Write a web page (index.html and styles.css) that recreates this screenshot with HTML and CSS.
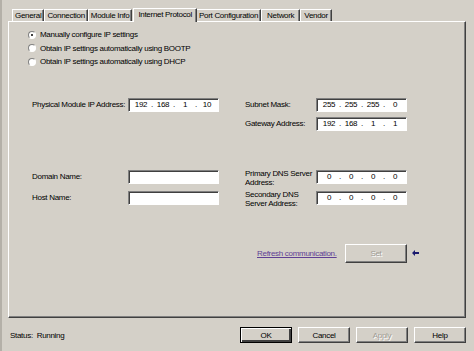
FILE: index.html
```html
<!DOCTYPE html>
<html lang="en">
<head>
    <meta charset="UTF-8">
    <title>Internet Protocol</title>
    <link rel="stylesheet" href="styles.css">
</head>
<body>
    <div class="window">
        <div class="tabs">
            <span class="tab">General</span>
            <span class="tab">Connection</span>
            <span class="tab">Module Info</span>
            <span class="tab active">Internet Protocol</span>
            <span class="tab">Port Configuration</span>
            <span class="tab tab-network">Network</span>
            <span class="tab tab-vendor">Vendor</span>
        </div>

        <div class="panel">
            <div class="radios">
                <label class="radio"><span class="radio-dot checked"></span>Manually configure IP settings</label>
                <label class="radio"><span class="radio-dot"></span>Obtain IP settings automatically using BOOTP</label>
                <label class="radio"><span class="radio-dot"></span>Obtain IP settings automatically using DHCP</label>
            </div>

            <div class="fields ip-fields">
                <span class="label">Physical Module IP Address:</span>
                <span class="ip"><span>192</span><i>.</i><span>168</span><i>.</i><span>1</span><i>.</i><span>10</span></span>
                <span></span>
                <span class="label">Subnet Mask:</span>
                <span class="ip"><span>255</span><i>.</i><span>255</span><i>.</i><span>255</span><i>.</i><span>0</span></span>

                <span class="label gateway">Gateway Address:</span>
                <span class="ip"><span>192</span><i>.</i><span>168</span><i>.</i><span>1</span><i>.</i><span>1</span></span>
            </div>

            <div class="fields dns-fields">
                <span class="label">Domain Name:</span>
                <span class="text-box"></span>
                <span></span>
                <span class="label two-line">Primary DNS Server<br>Address:</span>
                <span class="ip"><span>0</span><i>.</i><span>0</span><i>.</i><span>0</span><i>.</i><span>0</span></span>

                <span class="label">Host Name:</span>
                <span class="text-box"></span>
                <span></span>
                <span class="label two-line">Secondary DNS<br>Server Address:</span>
                <span class="ip"><span>0</span><i>.</i><span>0</span><i>.</i><span>0</span><i>.</i><span>0</span></span>
            </div>

            <div class="refresh-row">
                <a href="#" class="link">Refresh communication.</a>
                <button class="btn set-btn" disabled>Set</button>
                <svg class="arrow" width="7" height="6" viewBox="0 0 7 6">
                    <path d="M0 3 L3 0 L3 2 L7 2 L7 4 L3 4 L3 6 Z" fill="#1a1a6e"/>
                </svg>
            </div>
        </div>

        <div class="footer">
            <span class="status">Status:&nbsp; Running</span>
            <div class="buttons">
                <button class="btn default">OK</button>
                <button class="btn">Cancel</button>
                <button class="btn" disabled>Apply</button>
                <button class="btn">Help</button>
            </div>
        </div>
    </div>
</body>
</html>
```

FILE: styles.css
```css
body {
    margin: 0;
    background-color: #d4d0c8;
    font-family: "Liberation Sans", Arial, sans-serif;
    font-size: 8px;
    letter-spacing: -0.3px;
    color: #000;
}

.window {
    width: 474px;
    height: 351px;
    padding: 8px 8px 0 6px;
    box-sizing: border-box;
    border-left: 2px solid #b4b0a8;
}

.tabs {
    display: flex;
    height: 13px;
    margin-left: 4px;
    align-items: flex-end;
}

.tab {
    height: 11px;
    line-height: 11px;
    padding: 0 2px;
    border-top: 1px solid #fff;
    border-left: 1px solid #fff;
    border-right: 1px solid #404040;
    box-shadow: inset -1px 0 0 #808080;
    white-space: nowrap;
}

.tab-network {
    padding: 0 5px;
}

.tab-vendor {
    padding: 0 3px;
}

.tab.active {
    height: 13px;
    line-height: 12px;
    padding: 0 4px;
    margin: 0 -1px -1px 1px;
    position: relative;
    z-index: 1;
    background-color: #d4d0c8;
}

.panel {
    height: 297px;
    box-sizing: border-box;
    border-top: 1px solid #fff;
    border-left: 1px solid #fff;
    border-right: 1px solid #404040;
    border-bottom: 1px solid #404040;
    box-shadow: inset -1px -1px 0 #808080;
    padding: 6px 0 0 23px;
}

.radios {
    display: flex;
    flex-direction: column;
}

.radio {
    display: flex;
    align-items: center;
    height: 13.5px;
    gap: 4px;
    margin-left: -4px;
}

.radio-dot {
    width: 8px;
    height: 8px;
    border-radius: 50%;
    background-color: #fff;
    border: 1px solid;
    border-color: #808080 #fff #fff #808080;
    box-sizing: border-box;
    position: relative;
}

.radio-dot.checked::after {
    content: "";
    position: absolute;
    left: 2px;
    top: 2px;
    width: 2px;
    height: 2px;
    border-radius: 50%;
    background-color: #000;
}

.fields {
    display: grid;
    grid-template-columns: 96px 91px 26px 71px 91px;
    grid-auto-rows: 14px;
    align-items: center;
}

.ip-fields {
    margin-top: 29px;
    row-gap: 5px;
}

.ip-fields .gateway {
    grid-column: 4;
}

.dns-fields {
    margin-top: 39px;
    row-gap: 7px;
}

.label {
    white-space: nowrap;
}

.two-line {
    line-height: 9px;
    align-self: start;
    margin-top: -1px;
}

.ip, .text-box {
    height: 14px;
    box-sizing: border-box;
    background-color: #fff;
    border-top: 1px solid #808080;
    border-left: 1px solid #808080;
    border-bottom: 1px solid #fff;
    border-right: 1px solid #fff;
    box-shadow: inset 1px 1px 0 #404040;
}

.ip {
    display: flex;
    align-items: center;
    padding-left: 3px;
}

.ip span {
    width: 18px;
    text-align: center;
}

.ip i {
    width: 4px;
    font-style: normal;
    text-align: center;
}

.refresh-row {
    display: flex;
    align-items: center;
    width: 387px;
    box-sizing: border-box;
    margin-top: 39px;
    padding-left: 225px;
}

.link {
    color: #5f3f94;
    text-decoration: underline;
    white-space: nowrap;
}

.btn {
    font: inherit;
    letter-spacing: inherit;
    height: 16px;
    width: 52px;
    padding: 0;
    background-color: #d4d0c8;
    border: 1px solid;
    border-color: #fff #404040 #404040 #fff;
    box-shadow: inset -1px -1px 0 #808080;
    color: #000;
}

.btn:disabled {
    color: #a09c94;
    text-shadow: 1px 1px 0 #fff;
}

.btn.default {
    border-color: #000;
    box-shadow: inset 1px 1px 0 #fff, inset -2px -2px 0 #404040;
}

.set-btn {
    width: 62px;
    height: 19px;
    margin-left: auto;
}

.arrow {
    margin-left: 5px;
}

.footer {
    display: flex;
    align-items: center;
    justify-content: space-between;
    margin-top: 9px;
    padding-left: 2px;
}

.buttons {
    display: flex;
    gap: 6px;
}
```
